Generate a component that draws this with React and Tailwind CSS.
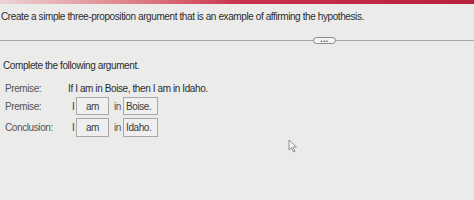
export default function App() {
  return (
    <div className="relative w-[474px] h-[200px] overflow-hidden bg-[#ebebea] text-[#333] tracking-[-0.4px]" style={{ fontFamily: '"Liberation Sans", Arial, sans-serif' }}>
      <div className="h-[4px] w-full bg-gradient-to-r from-[#ecd3d8] via-[#c8324c] to-[#b8203c]" />
      <div className="pt-[7px] pl-[1px] text-[10px] leading-[12px] text-[#2c2c2c]">
        Create a simple three-proposition argument that is an example of affirming the hypothesis.
      </div>
      <div className="relative mt-[13px] h-[9px] flex items-center">
        <div className="h-px w-full bg-[#a9a9a9]" />
        <div className="absolute left-[313px] top-[1px] h-[7px] w-[23px] rounded-full border border-[#8a8a8a] bg-[#f2f2f2] flex items-center justify-center text-[6px] leading-none text-[#555] tracking-[0.5px]">•••</div>
      </div>
      <div className="mt-[15px] pl-[3px] text-[10px] leading-[12px] text-[#2c2c2c]">Complete the following argument.</div>
      <div className="mt-[10px] pl-[5px] text-[10px] text-[#3a3a3a] flex flex-col">
        <div className="flex items-center h-[12px]">
          <span className="w-[63px] text-[#555]">Premise:</span>
          <span className="text-[#2c2c2c]">If I am in Boise, then I am in Idaho.</span>
        </div>
        <div className="flex items-center mt-[2px] h-[20px]">
          <span className="w-[63px] text-[#555]">Premise:</span>
          <span className="ml-[4px] w-[4px]">I</span>
          <span className="w-[33px] h-[18px] border border-[#a9a9a9] bg-[#efefef] flex items-center justify-center">am</span>
          <span className="ml-[5px] w-[9px] text-[#555]">in</span>
          <span className="w-[35px] h-[18px] border border-[#a9a9a9] bg-[#efefef] flex items-center pl-[2px]">Boise.</span>
        </div>
        <div className="flex items-center mt-[1px] h-[20px]">
          <span className="w-[63px] text-[#555]">Conclusion:</span>
          <span className="ml-[4px] w-[4px]">I</span>
          <span className="w-[33px] h-[19px] border border-[#a9a9a9] bg-[#efefef] flex items-center justify-center">am</span>
          <span className="ml-[5px] w-[9px] text-[#555]">in</span>
          <span className="w-[35px] h-[19px] border border-[#a9a9a9] bg-[#efefef] flex items-center pl-[2px]">Idaho.</span>
        </div>
      </div>
      <svg className="absolute left-[288px] top-[139px]" width="9" height="14" viewBox="0 0 9 14">
        <path d="M1 1 L1 11 L3.5 8.5 L5.5 13 L7 12.3 L5 8 L8.5 8 Z" fill="#f5f5f5" stroke="#777" strokeWidth="0.8" />
      </svg>
    </div>
  );
}
